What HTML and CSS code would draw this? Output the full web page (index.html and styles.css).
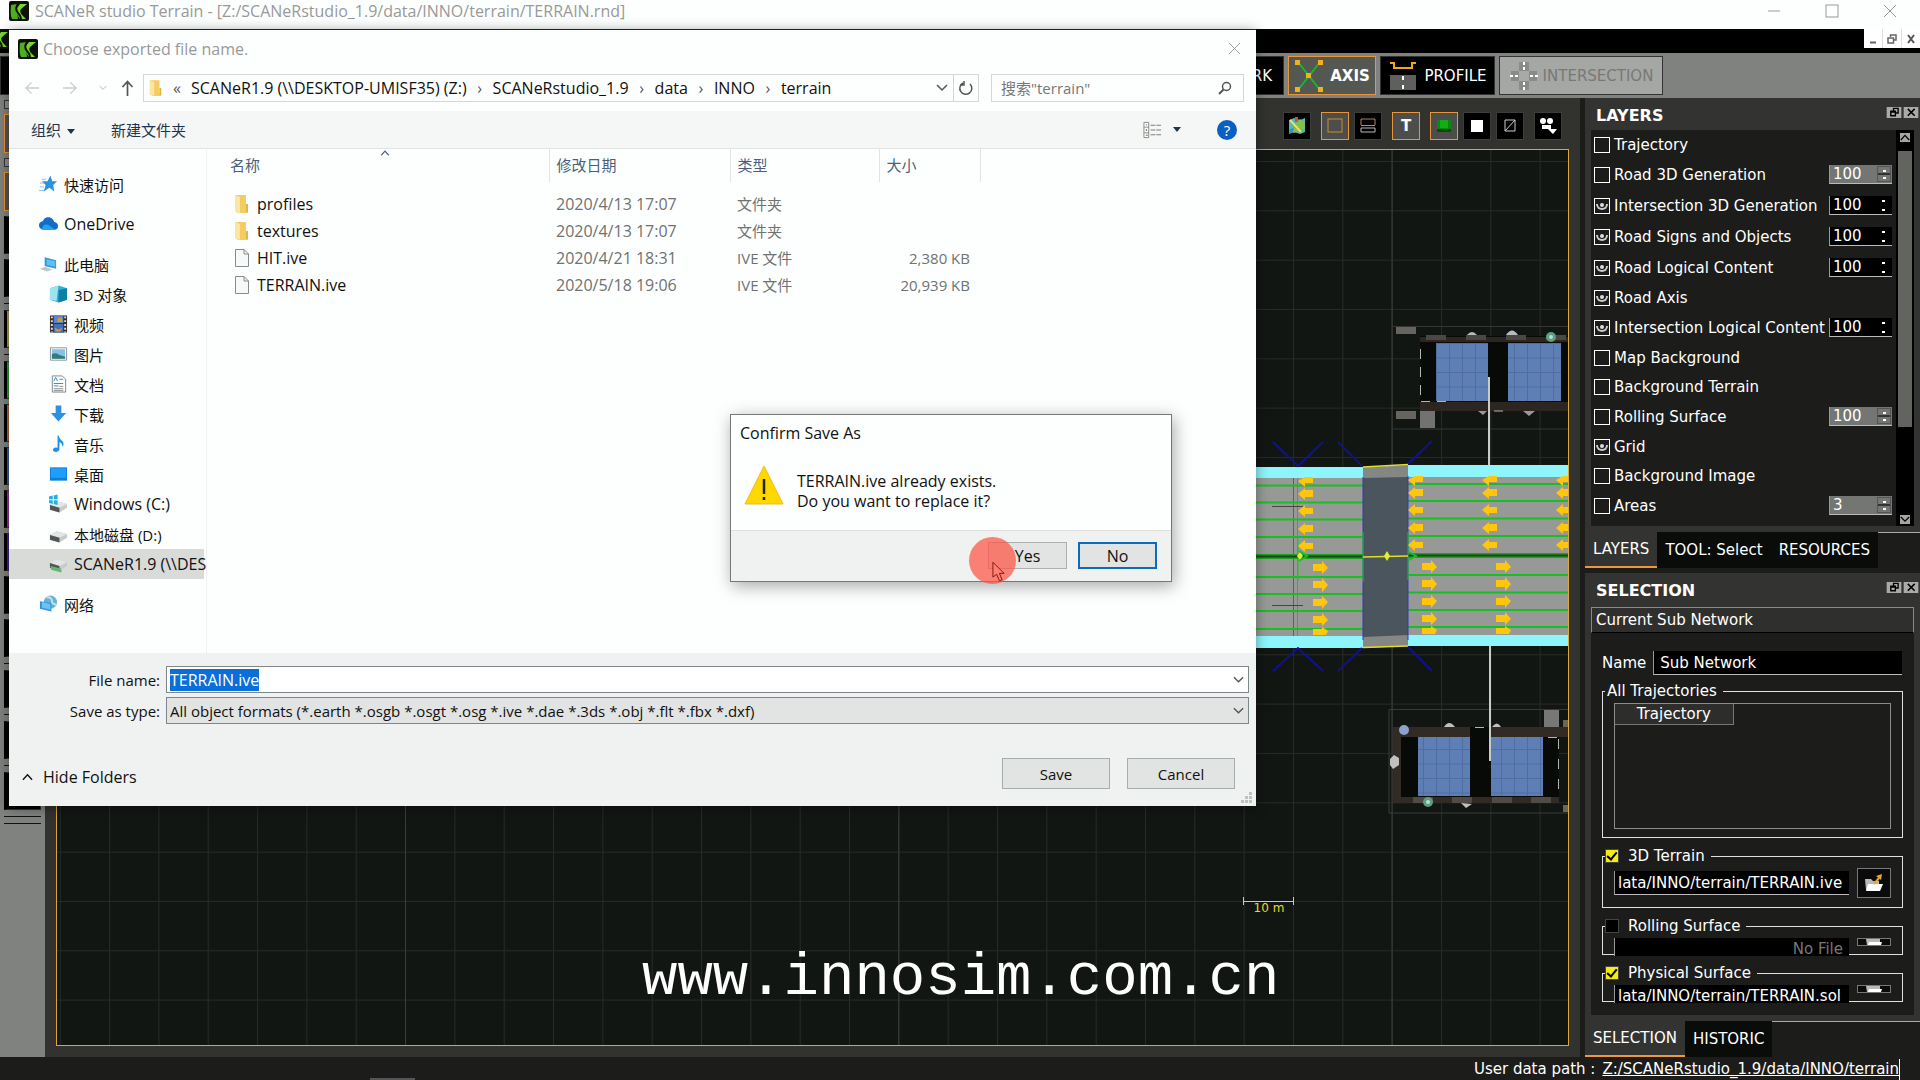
FILE: index.html
```html
<!DOCTYPE html>
<html lang="en">
<head>
    <meta charset="UTF-8">
    <meta name="viewport" content="width=device-width, initial-scale=1.0">
    <title>SCANeR studio Terrain</title>
    <link rel="stylesheet" href="styles.css">
</head>
<body>

<!-- shared icons -->
<svg class="defs" aria-hidden="true">
    <symbol id="logo" viewBox="0 0 20 20">
        <rect width="20" height="20" rx="2" fill="#0c120a"/>
        <path d="M2 4L8 3Q6 7 8 11L9 18H3Q1 14 2 4Z" fill="#4fae1e"/>
        <path d="M11 3H18L12 8Q10 10 13 14L17 18H11Q6 12 8 7Z" fill="#79d72c"/>
        <path d="M10 2Q5 7 9 12Q12 15 12 19" stroke="#0c120a" stroke-width="2" fill="none"/>
    </symbol>
    <symbol id="folder" viewBox="0 0 16 20">
        <path d="M1 1H12V16L14 17V19H4L1 17Z" fill="#f3cc63"/>
        <path d="M1 1L6 3V19L1 17Z" fill="#fbe6a2"/>
        <path d="M12 10h2v8h-2z" fill="#e3b548"/>
    </symbol>
    <symbol id="file" viewBox="0 0 16 20">
        <path d="M1.500 1.500H10L14.500 6V18.500H1.500Z" fill="#f7f9f9" stroke="#858b8e"/>
        <path d="M10 1.500V6H14.500" fill="none" stroke="#858b8e"/>
    </symbol>
    <symbol id="chev-down" viewBox="0 0 12 8"><path d="M1 1L6 6L11 1" fill="none" stroke="currentColor" stroke-width="1.500"/></symbol>
    <symbol id="chev-up" viewBox="0 0 12 8"><path d="M1 7L6 1.500L11 7" fill="none" stroke="currentColor" stroke-width="1.500"/></symbol>
    <symbol id="cross" viewBox="0 0 14 14"><path d="M1 1L13 13M13 1L1 13" stroke="currentColor" fill="none"/></symbol>
    <symbol id="drive" viewBox="0 0 20 18">
        <path d="M1 9L8 5L19 8V12L11 17L1 14Z" fill="#c9cbcb"/>
        <path d="M1 9L11 12L19 8L8 5Z" fill="#e3e5e5"/>
        <path d="M1 9L11 12V17L1 14Z" fill="#505654"/>
    </symbol>
    <symbol id="dock-float" viewBox="0 0 16 12">
        <rect width="16" height="12" fill="#a9aba8"/>
        <path d="M7.500 4V1.500H12.500V6.500H10M4.500 4.500H9.500V9.500H4.500ZM4 5.500H10" fill="none" stroke="#000" stroke-width="1.500"/>
    </symbol>
    <symbol id="dock-close" viewBox="0 0 16 12">
        <rect width="16" height="12" fill="#a9aba8"/>
        <path d="M4.500 2L12 9.500M12 2L4.500 9.500" stroke="#000" stroke-width="1.700"/>
    </symbol>
    <symbol id="open" viewBox="0 0 20 18">
        <path d="M1 5H7L9 7H15V16H2Z" fill="#b9bab9"/>
        <path d="M4 10H19L16 17H2Z" fill="#fff"/>
        <path d="M10 10L15 4" stroke="#e5a82a" stroke-width="2"/>
        <path d="M12 2L18 0L17 6Z" fill="#e5a82a"/>
    </symbol>
    <symbol id="open-clipped" viewBox="0 0 20 6">
        <path d="M2 0H16V6H3Z" fill="#b9bab9"/>
        <path d="M5 3H18L17 6H4Z" fill="#fff"/>
    </symbol>
    <symbol id="lanes-l" viewBox="0 0 15 80" overflow="visible">
        <path d="M0 6L7 2H15V8H7V12ZM0 19L7 13V15H15V22H7V25ZM0 36L7 30V33H15V39H7V42ZM0 54L7 48V50H15V57H7V60ZM0 71L7 65V68H15V74H7V77Z" fill="#ffc60b"/>
    </symbol>
    <symbol id="lanes-r" viewBox="0 0 15 80" overflow="visible">
        <path d="M15 7L9 0V3H0V10H9V13ZM15 24L9 17V20H0V27H9V31ZM15 41L9 35V38H0V45H9V48ZM15 59L9 52V55H0V62H9V65ZM15 70L9 66V68H0V74H13Z" fill="#ffc60b"/>
    </symbol>
</svg>

<div class="app">
    <header class="titlebar">
        <svg class="logo"><use href="#logo"/></svg>
        <h1>SCANeR studio Terrain - [Z:/SCANeRstudio_1.9/data/INNO/terrain/TERRAIN.rnd]</h1>
        <div class="window-buttons">
            <button aria-label="Minimize"><svg viewBox="0 0 14 14"><path d="M1 7H13" stroke="currentColor"/></svg></button>
            <button aria-label="Maximize"><svg viewBox="0 0 14 14"><rect x="1" y="1" width="12" height="12" fill="none" stroke="currentColor"/></svg></button>
            <button aria-label="Close"><svg><use href="#cross"/></svg></button>
        </div>
    </header>

    <div class="menubar">
        <svg class="logo"><use href="#logo"/></svg>
        <div class="mdi-buttons">
            <button aria-label="Minimize document"><svg viewBox="0 0 10 10"><path d="M2 8.500H8" stroke="#666" stroke-width="2"/></svg></button>
            <button aria-label="Restore document"><svg viewBox="0 0 10 10"><path d="M3.500 3V1H9V6H7M1 4H6.500V9H1Z" stroke="#666" fill="none" stroke-width="1.500"/></svg></button>
            <button aria-label="Close document"><svg viewBox="0 0 10 10"><path d="M2 1L8 9M8 1L2 9" stroke="#555" stroke-width="2"/></svg></button>
        </div>
    </div>

    <div class="modebar">
        <button class="mode network">NETWORK</button>
        <button class="mode active">
            <svg viewBox="0 0 30 36" class="mode-icon"><path d="M4 4L26 32M26 4L4 32" stroke="#18b82e" stroke-width="2"/><path d="M1 2h5v5H1zM24 2h5v5h-5zM12 15h5v5h-5zM1 29h5v5H1zM24 29h5v5h-5z" fill="#f2b01e"/></svg>
            AXIS
        </button>
        <button class="mode">
            <svg viewBox="0 0 30 36" class="mode-icon"><path d="M2 5H6V10H24V5H28" fill="none" stroke="#f2a51e" stroke-width="2"/><rect x="2" y="17" width="26" height="15" fill="#5d605d"/><path d="M15 18v4M15 27v4" stroke="#fff" stroke-width="2"/></svg>
            PROFILE
        </button>
        <button class="mode off">
            <svg viewBox="0 0 30 36" class="mode-icon"><path d="M10 4h10v9h8v10h-8v9H10v-9H2V13h8z" fill="#8a8c8a"/><path d="M10 13h10v10H10z" fill="#a8aaa8"/><path d="M15 4v3M15 9v3M15 24v3M15 29v3M1 18h3M6 18h3M21 18h3M26 18h3" stroke="#fff" stroke-width="2"/></svg>
            INTERSECTION
        </button>
    </div>

    <main class="workspace">
        <aside class="toolstrip">
            <i class="tool grey"></i><i class="tool lit"></i><i class="tool grey"></i><i class="tool lit"></i>
            <i class="tool"></i><i class="tool"></i><hr>
            <i class="tool yellow"></i><hr>
            <i class="tool green"></i><i class="tool orange"></i><i class="tool blue"></i><i class="tool pink"></i>
            <i class="tool purple"></i><i class="tool"></i><i class="tool"></i><hr>
            <i class="tool"></i><hr><i class="tool"></i><hr><i class="tool"></i><hr><hr>
        </aside>

        <section class="map-frame">
            <div class="map-tools">
                <button aria-label="Background map"><svg viewBox="0 0 20 20"><path d="M2 4L7 2L13 4L18 2V16L13 18L7 16L2 18Z" fill="#58b6b0"/><path d="M2 14L13 3L18 7V12L7 17Z" fill="#7fc14b"/><path d="M3 4L14 16" stroke="#f0dc6a" stroke-width="2"/><path d="M8 1h3v5H8z" fill="#d04f35"/><path d="M2 14L7 11L6 16L2 18Z" fill="#3b8fd8"/></svg></button>
                <button class="on gap" aria-label="Top view"><svg viewBox="0 0 20 20"><rect x="3" y="3" width="14" height="13" fill="none" stroke="#c98f28"/></svg></button>
                <button aria-label="Split view"><svg viewBox="0 0 20 20"><path d="M3 9V3H17V9" fill="none" stroke="#b98357"/><path d="M3 12V16H17V12Z" fill="none" stroke="#bbb"/><path d="M3 9.500H17" stroke="#c98f28"/></svg></button>
                <button class="on gap" aria-label="Text">T</button>
                <button class="on gap" aria-label="Surface"><svg viewBox="0 0 20 20"><rect x="3" y="4" width="14" height="12" fill="#078a0c"/><path d="M6 4h8v8H6z" fill="#12ad17"/><path d="M3 13h14v3H3z" fill="#034d06"/></svg></button>
                <button aria-label="Filled"><svg viewBox="0 0 20 20"><rect x="4" y="4" width="12" height="12" fill="#fff"/></svg></button>
                <button aria-label="Wireframe"><svg viewBox="0 0 20 20"><path d="M5 4H15V15H5ZM15 4L5 15" fill="none" stroke="#ccc"/></svg></button>
                <button class="gap" aria-label="Camera"><svg viewBox="0 0 20 20"><circle cx="5" cy="5" r="3" fill="#fff"/><circle cx="12" cy="5" r="3" fill="#fff"/><path d="M4 9h9v4H4zM10 13h9l-4 5z" fill="#fff"/></svg></button>
            </div>
            <div class="map">
                <svg class="terrain" viewBox="57 150 1511 896" preserveAspectRatio="xMaxYMin slice">
                    <defs>
                        <pattern id="minor" x="10.400" y="161" width="49.330" height="49.330" patternUnits="userSpaceOnUse"><path d="M0 .5H50M.5 0V50" stroke="#272a27" fill="none"/></pattern>
                        <pattern id="major" x="405" y="0" width="493.300" height="2000" patternUnits="userSpaceOnUse"><path d="M.5 0V2000" stroke="#3a3d3a"/></pattern>
                        <pattern id="tiles" x="1436" y="343" width="13" height="14.500" patternUnits="userSpaceOnUse"><rect width="13" height="14.500" fill="#5e7eb6"/><path d="M0 .5H13M.5 0V15" stroke="#506d9f" fill="none"/></pattern>
                    </defs>
                    <rect x="57" y="150" width="1511" height="896" fill="#121613"/>
                    <rect x="57" y="150" width="1511" height="896" fill="url(#minor)"/>
                    <rect x="57" y="150" width="1511" height="896" fill="url(#major)"/>

                    <!-- upper building -->
                    <path d="M1392 326.500H1568M1392 429H1568" stroke="#363636"/>
                    <path d="M1420 336H1568V411H1420Z" fill="#080a08"/>
                    <path d="M1420 337H1568V342H1420ZM1420 402H1568V411H1420Z" fill="#2c2520"/>
                    <path d="M1426 335h20v5h-20zM1466 335h20v5h-20zM1506 335h20v5h-20zM1546 335h20v5h-20z" fill="#4a4745"/>
                    <path d="M1396 327h20v7h-20zM1396 411h20v8h-20z" fill="#66645e"/>
                    <path d="M1420 411h15v17h-15z" fill="#727272"/>
                    <path d="M1420.500 349v52M1421 401.500h9M1437 401.500h9M1494 411h9" stroke="#b5b5b0" stroke-dasharray="10 8"/>
                    <path d="M1436 343h52v58h-52zM1508 343h53v58h-53z" fill="url(#tiles)"/>
                    <path d="M1467 335q5-6 10 0zM1506 335q6-9 12 0z" fill="#b7bac0"/>
                    <path d="M1478 411l5 4 4-4zM1523 411l6 5 6-5z" fill="#999"/>
                    <circle cx="1551" cy="337" r="5" fill="#5f9c82"/><circle cx="1551" cy="337" r="2" fill="#b4dfca"/>

                    <!-- lower building -->
                    <path d="M1568 709.500H1389V813H1568" fill="none" stroke="#3a3a3a"/>
                    <path d="M1393 727h166v76h-166z" fill="#080a08"/>
                    <path d="M1393 727h77v10h-69v66h-8zM1490 727h78v10h-78zM1401 797h158v6h-158z" fill="#322a24"/>
                    <path d="M1413 797h20v6h-20zM1452 797h20v6h-20zM1492 797h20v6h-20zM1531 797h20v6h-20z" fill="#504b46"/>
                    <path d="M1544 710h15v17h-15z" fill="#777"/><path d="M1563 720h5v7h-5zM1563 805h5v7h-5z" fill="#6b6655"/>
                    <path d="M1418 737h52v59h-52zM1491 737h52v59h-52z" fill="url(#tiles)"/>
                    <path d="M1558.500 739v56M1475 727.500h9M1548 737.500h9" stroke="#b5b5b0" stroke-dasharray="10 10"/>
                    <path d="M1444 727q5-8 11 0zM1492 727q5-7 9 0zM1390 759l4-4 5 3v7l-6 4-3-4zM1461 803l5 5 6-4z" fill="#c0c0c0"/>
                    <circle cx="1404" cy="730" r="5" fill="#8ca3cf"/><circle cx="1428" cy="802" r="5" fill="#5f9c82"/><circle cx="1428" cy="802" r="2" fill="#b4dfca"/>
                    <path d="M1489 377V465M1490 646V761" stroke="#c9ccc9" stroke-width="2"/>

                    <!-- road -->
                    <path d="M1200 467h163v181h-163zM1408 465h160v181h-160z" fill="#8df5fb"/>
                    <path d="M1200 478h163v158h-163zM1408 477h160v158h-160z" fill="#979996"/>
                    <path d="M1293.500 478V636" stroke="#606060"/><path d="M1297.500 478V636" stroke="#7c77a8"/>
                    <path d="M1272 506.500h31M1272 605.500h31" stroke="#454545"/>
                    <path d="M1200 485.500h163M1200 502.500h163M1200 519.500h163M1200 537h163M1200 577h163M1200 594h163M1200 611h163M1200 629h163M1408 484h160M1408 501h160M1408 518.500h160M1408 536h160M1408 575h160M1408 592.500h160M1408 610h160M1408 627h160" stroke="#18bf20" stroke-width="2"/>
                    <path d="M1200 556.500h163M1408 555.500h160" stroke="#16a51c" stroke-width="5"/>
                    <path d="M1200 556.500h163M1408 555.500h160" stroke="#24401d" stroke-width="2"/>
                    <path d="M1363 467L1408 465V646L1363 648Z" fill="#858784"/>
                    <path d="M1363 478L1408 477V635L1363 637Z" fill="#4b555e"/>
                    <path d="M1363 477V640M1408 476V640" stroke="#3436b5"/>
                    <path d="M1363 532V582M1408 532V580M1298 540V580" stroke="#22c52c"/>
                    <path d="M1363 467L1408 464.500M1363 647.500L1408 646M1363 557L1408 556" stroke="#dede25" stroke-width="1.500"/>
                    <path d="M1387 551l3 5-3 5-3-5zM1297 556l3-4 3 4-3 4z" fill="#e5ee2a"/>
                    <path d="M1299 551L1307 556L1299 561M1409 552L1416 556L1409 560" fill="none" stroke="#18bf20" stroke-width="2"/>
                    <path d="M1273 442L1298 466L1323 442M1338 442L1362 466M1408 464L1432 441M1273 671L1298 648L1323 671M1338 671L1362 648M1408 647L1432 671" fill="none" stroke="#11118f" stroke-width="2"/>
                    <use href="#lanes-l" x="1298" y="475" width="15" height="80"/>
                    <use href="#lanes-l" x="1408" y="474" width="15" height="80"/>
                    <use href="#lanes-l" x="1482" y="474" width="15" height="80"/>
                    <use href="#lanes-l" x="1556" y="474" width="15" height="80"/>
                    <use href="#lanes-r" x="1313" y="561" width="15" height="80"/>
                    <use href="#lanes-r" x="1422" y="560" width="15" height="80"/>
                    <use href="#lanes-r" x="1496" y="560" width="15" height="80"/>

                    <!-- scale -->
                    <path d="M1243.500 897v8M1293.500 897v8M1243 901.500h51" stroke="#e6d62c" fill="none"/>
                    <text x="1269" y="912" class="scale-text">10 m</text>
                </svg>
                <p class="watermark">www.innosim.com.cn</p>
            </div>
        </section>

        <aside class="dock">
            <section class="panel layers">
                <header class="panel-title"><h2>LAYERS</h2><button aria-label="Float layers"><svg><use href="#dock-float"/></svg></button><button aria-label="Close layers"><svg><use href="#dock-close"/></svg></button></header>
                <div class="layer-body">
                    <ul class="layer-list">
                        <li><label><input type="checkbox">Trajectory</label></li>
                        <li class="spin"><label><input type="checkbox">Road 3D Generation</label><span class="spinner off"><input value="100" aria-label="Road 3D Generation opacity"><i></i></span></li>
                        <li class="spin"><label><input type="checkbox" checked>Intersection 3D Generation</label><span class="spinner"><input value="100" aria-label="Intersection 3D Generation opacity"><i></i></span></li>
                        <li class="spin"><label><input type="checkbox" checked>Road Signs and Objects</label><span class="spinner"><input value="100" aria-label="Road Signs opacity"><i></i></span></li>
                        <li class="spin"><label><input type="checkbox" checked>Road Logical Content</label><span class="spinner"><input value="100" aria-label="Road Logical opacity"><i></i></span></li>
                        <li><label><input type="checkbox" checked>Road Axis</label></li>
                        <li class="spin"><label><input type="checkbox" checked>Intersection Logical Content</label><span class="spinner"><input value="100" aria-label="Intersection Logical opacity"><i></i></span></li>
                        <li><label><input type="checkbox">Map Background</label></li>
                        <li><label><input type="checkbox">Background Terrain</label></li>
                        <li class="spin"><label><input type="checkbox">Rolling Surface</label><span class="spinner off"><input value="100" aria-label="Rolling Surface opacity"><i></i></span></li>
                        <li><label><input type="checkbox" checked>Grid</label></li>
                        <li><label><input type="checkbox">Background Image</label></li>
                        <li class="spin"><label><input type="checkbox">Areas</label><span class="spinner off"><input value="3" aria-label="Areas"><i></i></span></li>
                    </ul>
                    <div class="scrollbar">
                        <button aria-label="Scroll up"><svg><use href="#chev-up"/></svg></button>
                        <div class="track"><div class="thumb"></div></div>
                        <button aria-label="Scroll down"><svg><use href="#chev-down"/></svg></button>
                    </div>
                </div>
            </section>
            <nav class="tabs"><button class="current">LAYERS</button><button>TOOL: Select</button><button>RESOURCES</button></nav>

            <section class="panel selection">
                <header class="panel-title"><h2>SELECTION</h2><button aria-label="Float selection"><svg><use href="#dock-float"/></svg></button><button aria-label="Close selection"><svg><use href="#dock-close"/></svg></button></header>
                <div class="sel-body">
                    <h3>Current Sub Network</h3>
                    <div class="name-row"><label for="subName">Name</label><input id="subName" value="Sub Network"></div>
                    <fieldset class="trajectories">
                        <legend>All Trajectories</legend>
                        <div class="traj-box"><table><tr><th>Trajectory</th></tr></table></div>
                    </fieldset>
                    <fieldset>
                        <legend><label><input type="checkbox" checked>3D Terrain</label></legend>
                        <div class="path-row"><input value="lata/INNO/terrain/TERRAIN.ive" aria-label="3D Terrain file"><button aria-label="Open 3D terrain"><svg><use href="#open"/></svg></button></div>
                    </fieldset>
                    <fieldset class="short">
                        <legend><label><input type="checkbox">Rolling Surface</label></legend>
                        <div class="path-row"><input value="No File" disabled aria-label="Rolling surface file"><button aria-label="Open rolling surface"><svg><use href="#open-clipped"/></svg></button></div>
                    </fieldset>
                    <fieldset class="short">
                        <legend><label><input type="checkbox" checked>Physical Surface</label></legend>
                        <div class="path-row"><input value="lata/INNO/terrain/TERRAIN.sol" aria-label="Physical surface file"><button aria-label="Open physical surface"><svg><use href="#open-clipped"/></svg></button></div>
                    </fieldset>
                </div>
            </section>
            <nav class="tabs bottom"><button class="current">SELECTION</button><button>HISTORIC</button></nav>
        </aside>
    </main>

    <footer class="statusbar"><span>User data path :</span><a href="#">Z:/SCANeRstudio_1.9/data/INNO/terrain</a></footer>
</div>

<!-- export dialog -->
<div class="dialog" role="dialog" aria-label="Choose exported file name.">
    <header class="dialog-title">
        <svg class="logo"><use href="#logo"/></svg>
        <h2>Choose exported file name.</h2>
        <button aria-label="Close dialog"><svg><use href="#cross"/></svg></button>
    </header>

    <div class="address-row">
        <div class="history">
            <button disabled aria-label="Back"><svg viewBox="0 0 16 14"><path d="M15 7H2M7 1L1 7L7 13" fill="none" stroke="#ccc" stroke-width="1.500"/></svg></button>
            <button disabled aria-label="Forward"><svg viewBox="0 0 16 14"><path d="M1 7H14M9 1L15 7L9 13" fill="none" stroke="#ccc" stroke-width="1.500"/></svg></button>
            <button disabled aria-label="Recent" class="tiny"><svg><use href="#chev-down"/></svg></button>
            <button aria-label="Up"><svg viewBox="0 0 14 16"><path d="M7 16V2M2 7L7 1.500L12 7" fill="none" stroke="#555" stroke-width="1.700"/></svg></button>
        </div>
        <nav class="address">
            <svg class="folder"><use href="#folder"/></svg>
            <span class="sep first">«</span>
            <a href="#">SCANeR1.9 (\\DESKTOP-UMISF35) (Z:)</a><span class="sep">›</span>
            <a href="#">SCANeRstudio_1.9</a><span class="sep">›</span>
            <a href="#">data</a><span class="sep">›</span>
            <a href="#">INNO</a><span class="sep">›</span>
            <a href="#">terrain</a>
            <button class="drop" aria-label="Previous locations"><svg><use href="#chev-down"/></svg></button>
            <button class="refresh" aria-label="Refresh"><svg viewBox="0 0 16 16"><path d="M5 3A6 6 0 1 0 12 4M6 1V5H2" fill="none" stroke="#555" stroke-width="1.500"/></svg></button>
        </nav>
        <div class="search">
            <input placeholder='搜索"terrain"' aria-label="Search">
            <svg viewBox="0 0 14 14"><circle cx="8.500" cy="5.500" r="4" fill="none" stroke="#555" stroke-width="1.500"/><path d="M5.500 8.500L1 13" stroke="#555" stroke-width="2"/></svg>
        </div>
    </div>

    <div class="commands">
        <button>组织 <span class="caret"></span></button>
        <button>新建文件夹</button>
        <button class="view" aria-label="Change view"><svg viewBox="0 0 20 18"><path d="M1 1h5v16H1zM1 6h5M1 12h5" fill="#fff" stroke="#888"/><path d="M3 3h1v1H3z" fill="#378"/><path d="M3 8h1v2H3z" fill="#383"/><path d="M3 14h2v1H3z" fill="#b42"/><path d="M8 4h12M8 9h12M8 14h12" stroke="#777" stroke-dasharray="5 1"/></svg><span class="caret"></span></button>
        <button class="help" aria-label="Help">?</button>
    </div>

    <div class="browser">
        <ul class="places">
            <li class="root"><svg viewBox="0 0 20 20"><path d="M12 1L14 7H19L15 11L16 18L11 14L5 18L7 11L3 7H9Z" fill="#2a93dd"/><path d="M3 5h4M1 9h4M1 13h4M0 17h5" stroke="#7fb9e6"/></svg>快速访问</li>
            <li class="root latin"><svg viewBox="0 0 20 20"><path d="M4 16Q0 15 0 11Q0 8 4 7Q6 2 11 3Q15 4 16 8Q20 9 20 12Q20 16 16 16Z" fill="#0f6cc9"/><path d="M3 15Q5 9 10 11L17 16H5Z" fill="#2ba0ee"/></svg>OneDrive</li>
            <li class="root stay"><svg viewBox="0 0 20 20"><path d="M6 3L18 6V15L6 12Z" fill="#3098dd"/><path d="M8 5L17 7V13L8 11Z" fill="#64bdf0"/><path d="M1 15L7 13L14 16L8 18Z" fill="#bfc7ca"/></svg>此电脑</li>
            <li><svg viewBox="0 0 20 20"><path d="M1 4L10 1L19 4V16L10 19L1 16Z" fill="#35aed0"/><path d="M1 4L10 1L8 17L1 16Z" fill="#9de4f0"/><path d="M10 6L19 4V16L10 19Z" fill="#0d7fa8"/></svg>3D 对象</li>
            <li><svg viewBox="0 0 20 20"><path d="M1 1h18v18H1z" fill="#333"/><path d="M5 1h10v8H5z" fill="#5c86c6"/><path d="M5 10h10v9H5z" fill="#476eb8"/><path d="M9 4l4-1 2 5h-6zM6 14l4 2 4-2-2 4H7z" fill="#d09b3b"/><path d="M3 2v17M17 2v17" stroke="#ddd" stroke-width="2" stroke-dasharray="2 2"/></svg>视频</li>
            <li><svg viewBox="0 0 20 20"><path d="M1.500 3.500h17v13h-17z" fill="#fff" stroke="#899298"/><path d="M3 5h14v10H3z" fill="#86c1ea"/><path d="M3 10Q8 8 11 11L17 13V15H3Z" fill="#347b78"/></svg>图片</li>
            <li><svg viewBox="0 0 20 20"><path d="M3.500 1.500H14L17.500 5V18.500H3.500Z" fill="#fff" stroke="#7c868c"/><path d="M5 7L7 3L9 7M11 5h4M5 9.500h10M5 12h5" stroke="#2290bb" fill="none"/><path d="M11 12.500h4M5 15h10M5 17h10" stroke="#888"/></svg>文档</li>
            <li><svg viewBox="0 0 20 20"><path d="M7 1H13V9H18L10 18L2 9H7Z" fill="#2f8fe0"/></svg>下载</li>
            <li><svg viewBox="0 0 20 20"><path d="M10 1Q11 5 15 8Q16 11 14 13Q14 9 11 8V15Q11 18 7 18.500Q4 18 4 16Q5 13 9 14V1Z" fill="#1b94e6"/></svg>音乐</li>
            <li><svg viewBox="0 0 20 20"><path d="M1 3h18v14H1z" fill="#0f7ed6"/><path d="M2 4h16v10H2z" fill="#1e9fff"/></svg>桌面</li>
            <li class="latin"><svg viewBox="0 0 20 20"><use href="#drive" y="2" width="20" height="18"/><path d="M0 2l4-1v4H0zM5 1l4-1v5H5zM0 6h4v4L0 9zM5 6h4v5l-4-1z" fill="#23aee0"/></svg>Windows (C:)</li>
            <li><svg viewBox="0 0 20 20"><use href="#drive" y="2" width="20" height="18"/></svg>本地磁盘 (D:)</li>
            <li class="latin chosen"><svg viewBox="0 0 20 20"><use href="#drive" width="20" height="18"/><path d="M2 12L13 15V19L2 16Z" fill="#67b372"/></svg>SCANeR1.9 (\\DES</li>
            <li class="root net"><svg viewBox="0 0 20 20"><circle cx="12" cy="8" r="7" fill="#6cb0d4"/><path d="M8 3Q14 2 14 9L18 11" stroke="#c6e3f0" fill="none" stroke-width="2"/><path d="M1 7L13 9V18L1 15Z" fill="#2d93de"/><path d="M3 8L12 10V16L3 14Z" fill="#6cc0f3"/></svg>网络</li>
        </ul>

        <table class="files">
            <colgroup><col class="c-name"><col class="c-date"><col class="c-type"><col class="c-size"><col></colgroup>
            <thead>
                <tr><th>名称<svg class="sort"><use href="#chev-up"/></svg></th><th>修改日期</th><th>类型</th><th>大小</th><th></th></tr>
            </thead>
            <tbody>
                <tr><td><svg><use href="#folder"/></svg>profiles</td><td>2020/4/13 17:07</td><td>文件夹</td><td></td><td></td></tr>
                <tr><td><svg><use href="#folder"/></svg>textures</td><td>2020/4/13 17:07</td><td>文件夹</td><td></td><td></td></tr>
                <tr><td><svg><use href="#file"/></svg>HIT.ive</td><td>2020/4/21 18:31</td><td>IVE 文件</td><td>2,380 KB</td><td></td></tr>
                <tr><td><svg><use href="#file"/></svg>TERRAIN.ive</td><td>2020/5/18 19:06</td><td>IVE 文件</td><td>20,939 KB</td><td></td></tr>
            </tbody>
        </table>
    </div>

    <div class="save-area">
        <div class="field"><label for="fileName">File name:</label><div class="combo"><input id="fileName" value="TERRAIN.ive" autofocus onfocus="this.select()"><svg><use href="#chev-down"/></svg></div></div>
        <div class="field"><label for="fileType">Save as type:</label><div class="combo"><select id="fileType"><option>All object formats (*.earth *.osgb *.osgt *.osg *.ive *.dae *.3ds *.obj *.flt *.fbx *.dxf)</option></select><svg><use href="#chev-down"/></svg></div></div>
        <div class="actions">
            <button class="hide-folders"><svg><use href="#chev-up"/></svg>Hide Folders</button>
            <button class="push">Save</button>
            <button class="push">Cancel</button>
        </div>
        <svg class="grip" viewBox="0 0 12 12"><path d="M8 0h3v3H8zM8 4h3v3H8zM4 4h3v3H4zM8 8h3v3H8zM4 8h3v3H4zM0 8h3v3H0z" fill="#bfc1bf"/></svg>
    </div>
</div>

<!-- overwrite confirmation -->
<div class="confirm" role="alertdialog" aria-label="Confirm Save As">
    <h2>Confirm Save As</h2>
    <div class="message">
        <svg viewBox="0 0 40 40"><path d="M20 1L39 39H1Z" fill="#ffd800" stroke="#efbb2c"/><path d="M20 14V29M20 32V35" stroke="#222" stroke-width="2.500"/></svg>
        <p>TERRAIN.ive already exists.<br>Do you want to replace it?</p>
    </div>
    <footer><button>Yes</button><button class="default">No</button></footer>
</div>
<div class="click-mark"><svg viewBox="0 0 14 22"><path d="M1 1V17L5 14L8 21L11 20L8 13H13Z" fill="#ff8072" stroke="#7d1010"/></svg></div>

</body>
</html>
```
FILE: styles.css
```css
*, *::before, *::after {
    box-sizing: border-box;
}
body {
    margin: 0;
    background: #1c1c1b;
    font-family: "Open Sans", "Noto Sans CJK SC", sans-serif;
    font-size: 15px;
    overflow: hidden;
}
h1, h2, h3, p, ul {
    margin: 0;
    padding: 0;
    font-weight: normal;
    list-style: none;
}
button, input, select {
    font: inherit;
    color: inherit;
    margin: 0;
    padding: 0;
    border: 0;
    border-radius: 0;
    background: none;
    outline: none;
}
a {
    color: inherit;
    text-decoration: none;
}
svg {
    flex: none;
    display: block;
}
.defs {
    position: absolute;
    width: 0;
    height: 0;
}
.logo {
    width: 20px;
    height: 20px;
}

/* main window */
.app {
    display: flex;
    flex-direction: column;
    height: 100vh;
    color: #fff;
    font-family: "DejaVu Sans", Verdana, sans-serif;
}
.titlebar {
    display: flex;
    align-items: center;
    gap: 6px;
    height: 29px;
    padding: 0 23px 8px 9px;
    background: #fdfffe;
    color: #999;
    font-family: "Open Sans", sans-serif;
}
.titlebar h1 {
    flex: 1;
    font-size: 16px;
    line-height: 20px;
}
.window-buttons {
    display: flex;
    gap: 44px;
}
.window-buttons svg {
    width: 14px;
    height: 14px;
}
.menubar {
    display: flex;
    justify-content: space-between;
    height: 24px;
    background: #000;
}
.menubar .logo {
    margin-left: -10px;
}
.mdi-buttons {
    display: flex;
    gap: 1px;
    height: 19px;
    background: #ddd;
}
.mdi-buttons button {
    width: 18px;
    background: #fff;
}
.mdi-buttons svg {
    width: 10px;
    height: 10px;
    margin: auto;
}
.modebar {
    display: flex;
    gap: 4px;
    height: 45px;
    padding: 3px 0;
    background: #80827f;
}
.mode {
    display: flex;
    align-items: center;
    justify-content: center;
    gap: 6px;
    width: 115px;
    border: 1px solid #333;
    background: #000;
}
.mode.network {
    justify-content: flex-end;
    width: 67%;
    max-width: 1284px;
    padding-right: 11px;
}
.mode.active {
    width: 88px;
    border-color: #e8963a;
    background: #555753;
    font-weight: bold;
}
.mode.off {
    width: 164px;
    gap: 4px;
    background: #a5a7a4;
    color: #777976;
}
.mode-icon {
    width: 30px;
    height: 36px;
}
.workspace {
    flex: 1;
    display: flex;
    min-height: 0;
}
.toolstrip {
    width: 45px;
    padding: 2px 4px;
    background: #80827f;
}
.tool {
    display: block;
    height: 38px;
    margin-bottom: 5px;
    border: 1px solid #333;
    border-left: 3px solid #000;
    background: #000;
}
.tool.grey {
    height: 9px;
    border: 1px solid #333;
    background: #8e908d;
}
.tool.lit {
    height: 39px;
    border: 1px solid #e8963a;
    background: #555;
}
.tool.yellow { background: #a89a4a; }
.tool.green { background: #2f9b3b; }
.tool.orange { background: #a9683a; }
.tool.blue { background: #385a9a; }
.tool.pink { background: #9a2f92; }
.tool.purple { background: #43218f; }
.toolstrip hr {
    height: 1px;
    margin: 6px 0;
    border: 0;
    background: #111;
}
.map-frame {
    flex: 1;
    display: flex;
    flex-direction: column;
    min-width: 0;
    padding: 0 11px 11px;
    background: #32332f;
}
.map-tools {
    display: flex;
    align-items: center;
    justify-content: flex-end;
    gap: 5px;
    height: 51px;
    padding: 4px 7px 0 0;
}
.map-tools button {
    width: 28px;
    height: 28px;
    border: 1px solid #3c3c3a;
    background: #000;
    font-weight: bold;
}
.map-tools .on {
    border-color: #e8963a;
    background: #4d4e4b;
}
.map-tools .gap {
    margin-left: 5px;
}
.map-tools svg {
    width: 20px;
    height: 20px;
    margin: auto;
}
.map {
    flex: 1;
    position: relative;
    min-height: 0;
    border: 1px solid #dba637;
}
.terrain {
    width: 100%;
    height: 100%;
}
.scale-text {
    font: 12px "DejaVu Sans", sans-serif;
    fill: #e6d62c;
    text-anchor: middle;
}
.watermark {
    position: absolute;
    left: 585px;
    bottom: 30px;
    font: 59px/72px "Liberation Mono", monospace;
}

/* dock */
.dock {
    width: 340px;
    display: flex;
    flex-direction: column;
    border-left: 5px solid #1c1c1b;
}
.panel {
    padding: 0 6px 6px;
    background: #333432;
}
.panel-title {
    display: flex;
    align-items: center;
    gap: 1px;
    height: 32px;
    margin-right: -5px;
    padding-left: 5px;
}
.panel-title h2 {
    flex: 1;
    padding-top: 3px;
    font-size: 16px;
    font-weight: bold;
}
.panel-title button {
    padding-bottom: 4px;
}
.panel-title svg {
    width: 16px;
    height: 11px;
}
.layer-body {
    display: flex;
    height: 396px;
    background: #1c1c1b;
}
.layer-list {
    flex: 1;
    padding-left: 3px;
}
.layer-list li {
    display: flex;
    align-items: center;
    justify-content: space-between;
    height: 29px;
    padding-right: 4px;
    white-space: nowrap;
}
.layer-list .spin {
    height: 31px;
}
.layer-list label {
    display: flex;
    align-items: center;
    gap: 4px;
}
.layer-list input[type=checkbox] {
    appearance: none;
    position: relative;
    width: 16px;
    height: 16px;
    border: 1px solid #fff;
}
.layer-list input:checked::after {
    content: "";
    position: absolute;
    left: 1px;
    top: 5px;
    width: 12px;
    height: 6px;
    border: 2px solid #ccc;
    border-top: 0;
    border-radius: 0 0 6px 6px;
}
.layer-list input:checked::before {
    content: "";
    position: absolute;
    left: 5px;
    top: 4px;
    width: 4px;
    height: 4px;
    border-radius: 2px;
    background: #ddd;
}
.spinner {
    position: relative;
    width: 63px;
    height: 19px;
    border-left: 1px solid #999;
    border-bottom: 1px solid #bbb;
    background: #000;
}
.spinner input {
    width: 44px;
    height: 18px;
    padding-left: 3px;
}
.spinner i {
    position: absolute;
    right: 7px;
    top: 4px;
    width: 3px;
    height: 11px;
    border: solid #fff;
    border-width: 2px 0;
}
.spinner.off {
    background: #747673;
}
.spinner.off i {
    right: 1px;
    top: 1px;
    width: 14px;
    height: 16px;
    border: 1px solid #555;
    background:
        linear-gradient(#fff, #fff) 5px 3px / 3px 2px no-repeat,
        linear-gradient(#fff, #fff) 5px 10px / 3px 2px no-repeat,
        linear-gradient(#747673 6px, #333 6px, #333 8px, #747673 8px);
}
.scrollbar {
    display: flex;
    flex-direction: column;
    width: 18px;
    background: #000;
}
.scrollbar button {
    height: 14px;
}
.scrollbar svg {
    width: 10px;
    height: 9px;
    margin: 0 auto;
    background: #a5a7a4;
    color: #000;
}
.track {
    flex: 1;
    padding: 7px 2px;
}
.thumb {
    height: 78%;
    background: #62645f;
}
.tabs {
    display: flex;
    height: 36px;
    background: linear-gradient(#aaa 1px, #1c1c1b 1px);
}
.tabs button {
    padding: 0 8px;
    background: #090c09;
    white-space: nowrap;
}
.tabs .current {
    border-bottom: 2px solid #f0963c;
    background: #333432;
}
.selection {
    flex: 1;
    margin-top: 5px;
}
.sel-body {
    height: calc(100% - 34px);
    margin-top: 2px;
    background: #1c1c1b;
}
.sel-body h3 {
    height: 26px;
    margin-bottom: 18px;
    padding-left: 4px;
    border: 1px solid #888;
    border-bottom-color: #000;
    background: #2f302e;
    font-size: 15px;
    line-height: 24px;
}
.name-row {
    display: flex;
    align-items: center;
    gap: 7px;
    margin: 0 12px 7px 11px;
}
.name-row input, .path-row input {
    flex: 1;
    min-width: 0;
    height: 24px;
    padding-left: 6px;
    border-left: 1px solid #999;
    border-bottom: 1px solid #bbb;
    background: #000;
}
fieldset {
    height: 61px;
    margin: 0 11px 9px;
    padding: 0 11px;
    border: 1px solid #e0e0e0;
}
legend {
    margin-left: -9px;
    padding: 0 6px 0 0;
    line-height: 18px;
}
legend label {
    display: flex;
    align-items: center;
    gap: 9px;
}
legend input {
    appearance: none;
    position: relative;
    width: 14px;
    height: 14px;
    border: 1px solid #444;
    background: #000;
}
legend input:checked {
    background: #f4ea16;
}
legend input:checked::after {
    content: "";
    position: absolute;
    left: 3px;
    top: 0;
    width: 6px;
    height: 10px;
    border: solid #000;
    border-width: 0 2px 2px 0;
    transform: rotate(40deg);
}
.trajectories {
    height: 156px;
}
.trajectories legend {
    padding-left: 2px;
}
.traj-box {
    height: 126px;
    margin-top: 3px;
    border: 1px solid #8b8d8a;
}
.traj-box table {
    border-collapse: collapse;
}
.traj-box th {
    width: 118px;
    height: 20px;
    padding: 0;
    border: 1px solid #777;
    border-width: 0 1px 1px 0;
    background: #2d2e2c;
    font-weight: normal;
}
.path-row {
    display: flex;
    align-items: center;
    gap: 8px;
    margin-top: 3px;
}
.path-row input {
    padding-left: 3px;
}
.path-row button {
    width: 34px;
    height: 30px;
    border: 1px solid #777;
    background: #0b0b0b;
}
.path-row svg {
    width: 20px;
    height: 18px;
    margin: auto;
}
.short {
    height: 38px;
}
.short .path-row {
    align-items: flex-start;
}
.short .path-row input {
    height: 18px;
    padding-top: 3px;
    border-bottom: 0;
}
.short .path-row input:disabled {
    padding-right: 6px;
    color: #777;
    text-align: right;
}
.short .path-row button {
    height: 8px;
}
.short .path-row svg {
    height: 6px;
}
.statusbar {
    display: flex;
    gap: 7px;
    justify-content: flex-end;
    height: 23px;
    padding: 2px 20px 0 0;
    background: linear-gradient(#555, #555) 370px 21px / 45px 2px no-repeat #1c1c1b;
    line-height: 20px;
}
.statusbar a {
    border-right: 1px solid #fff;
    text-decoration: underline;
}

/* file dialog */
.dialog {
    position: absolute;
    left: 9px;
    top: 29px;
    width: calc(65% - 1px);
    border-top: 1px solid #222;
    background: #fdfffe;
    color: #111;
    box-shadow: 0 2px 12px rgba(0, 0, 0, .4);
}
.dialog-title {
    display: flex;
    align-items: center;
    gap: 5px;
    height: 37px;
    padding: 0 15px 0 9px;
    color: #999;
}
.dialog-title h2 {
    flex: 1;
    font-size: 16px;
}
.dialog-title button svg {
    width: 13px;
    height: 13px;
}
.address-row {
    display: flex;
    gap: 12px;
    padding: 7px 12px 9px 16px;
}
.history {
    display: flex;
    align-items: center;
    gap: 22px;
    width: 106px;
}
.history svg {
    width: 15px;
    height: 16px;
    color: #bbb;
}
.history .tiny svg {
    width: 8px;
    height: 8px;
}
.history button:last-child {
    margin-left: -9px;
}
.address, .search {
    display: flex;
    align-items: center;
    height: 28px;
    border: 1px solid #d5d7d6;
}
.address {
    flex: 1;
    padding-left: 5px;
    font-size: 16px;
}
.folder {
    width: 14px;
    height: 20px;
}
.sep {
    width: 26px;
    color: #555;
    text-align: center;
}
.sep.first {
    width: 28px;
}
.drop {
    margin-left: auto;
    padding: 0 5px;
    color: #555;
}
.drop svg {
    width: 12px;
    height: 8px;
}
.refresh {
    height: 26px;
    padding: 0 4px;
    border-left: 1px solid #d5d7d6;
}
.refresh svg {
    width: 16px;
    height: 16px;
}
.search {
    width: 253px;
    padding: 0 11px 0 9px;
}
.search input {
    flex: 1;
    min-width: 0;
}
.search input::placeholder {
    color: #777;
}
.search svg {
    width: 14px;
    height: 14px;
}
.commands {
    display: flex;
    align-items: center;
    height: 38px;
    padding: 0 19px 0 22px;
    gap: 36px;
    border-bottom: 1px solid #e2e4e3;
    background: #f5f7f6;
    color: #1e3450;
}
.caret {
    display: inline-block;
    margin-left: 2px;
    border: 4px solid transparent;
    border-top: 5px solid #1e3450;
    border-bottom: 0;
    vertical-align: middle;
}
.view {
    display: flex;
    align-items: center;
    gap: 9px;
    margin-left: auto;
}
.view svg {
    width: 19px;
    height: 18px;
}
.help {
    width: 20px;
    height: 20px;
    border-radius: 50%;
    background: #0a60c2;
    color: #fff;
    line-height: 20px;
}
.browser {
    display: flex;
    min-height: 504px;
}
.places {
    width: 198px;
    padding-top: 20px;
    border-right: 1px solid #f0f2f1;
}
.places li {
    display: flex;
    align-items: center;
    gap: 6px;
    width: 195px;
    height: 30px;
    padding-left: 40px;
    white-space: nowrap;
}
.places .root {
    margin-bottom: 10px;
    padding-left: 30px;
}
.places .latin {
    font-size: 16px;
}
.places .stay {
    margin-bottom: 0;
}
.places .net {
    margin-top: 10px;
}
.places .chosen {
    background: #d9dbd9;
}
.places svg {
    width: 19px;
    height: 20px;
}
.files {
    flex: 1;
    align-self: flex-start;
    table-layout: fixed;
    border-collapse: collapse;
    color: #6f7271;
}
.c-name { width: 342px; }
.c-date { width: 181px; }
.c-type { width: 149px; }
.c-size { width: 101px; }
.files th {
    height: 33px;
    padding: 0 0 2px 7px;
    border-right: 1px solid #e2e4e3;
    color: #4a5f7d;
    font-weight: normal;
    text-align: left;
}
.files th:first-child {
    position: relative;
    padding-left: 23px;
}
.files th:last-child {
    border: 0;
}
.files td {
    height: 27px;
    padding: 0 0 0 7px;
}
.files tbody::before {
    content: "";
    display: block;
    height: 8px;
}
.files td:first-child {
    display: flex;
    align-items: center;
    gap: 7px;
    padding-left: 27px;
    color: #111;
    font-size: 16px;
}
.files td:nth-child(2) {
    font-size: 16px;
}
.files td:nth-child(4) {
    padding-right: 10px;
    text-align: right;
}
.files svg {
    width: 16px;
    height: 20px;
}
.files .sort {
    position: absolute;
    left: 173px;
    top: 1px;
    width: 10px;
    height: 6px;
}
.save-area {
    position: relative;
    padding: 13px 7px 17px 0;
    background: #eff2f0;
}
.field {
    display: flex;
    align-items: center;
    gap: 6px;
    margin-bottom: 4px;
}
.field label {
    width: 151px;
    text-align: right;
}
.combo {
    flex: 1;
    position: relative;
    height: 27px;
    border: 1px solid #7d868b;
    background: #fff;
}
.combo input, .combo select {
    appearance: none;
    width: 100%;
    height: 25px;
    padding: 0 24px 0 3px;
}
.combo input {
    font-size: 16px;
}
.combo select {
    background: #e1e4e2;
}
.combo ::selection {
    background: #0a6fd6;
    color: #fff;
}
.combo svg {
    position: absolute;
    right: 4px;
    top: 9px;
    width: 11px;
    height: 8px;
    color: #555;
}
.actions {
    display: flex;
    align-items: center;
    gap: 17px;
    margin: 34px 14px 0 18px;
}
.hide-folders {
    display: flex;
    align-items: center;
    gap: 10px;
    margin: 6px auto 0 -5px;
    font-size: 16px;
}
.hide-folders svg {
    width: 11px;
    height: 8px;
}
.push {
    width: 108px;
    height: 31px;
    border: 1px solid #a6adb1;
    background: #e1e4e2;
}
.grip {
    position: absolute;
    right: 3px;
    bottom: 2px;
    width: 12px;
    height: 12px;
}

/* confirmation */
.confirm {
    position: absolute;
    left: 730px;
    top: 414px;
    width: 442px;
    border: 1px solid #777;
    background: #fdfffe;
    color: #111;
    font-size: 16px;
    box-shadow: 2px 4px 16px rgba(0, 0, 0, .35);
}
.confirm h2 {
    padding: 8px 9px 1px;
    font-size: 16px;
    line-height: 20px;
}
.message {
    display: flex;
    gap: 13px;
    height: 86px;
    padding: 21px 13px;
}
.message svg {
    width: 40px;
    height: 40px;
}
.message p {
    padding-top: 6px;
    line-height: 20px;
}
.confirm footer {
    display: flex;
    justify-content: flex-end;
    gap: 11px;
    padding: 11px 14px 12px;
    border-top: 1px solid #dfe1e0;
    background: #eff2f0;
}
.confirm button {
    width: 79px;
    height: 27px;
    border: 1px solid #adb0ae;
    background: #e1e4e2;
    line-height: 20px;
}
.confirm .default {
    border: 2px solid #0a6cbd;
}
.click-mark {
    position: absolute;
    left: 969px;
    top: 537px;
    width: 47px;
    height: 47px;
    padding: 24px 0 0 23px;
    border-radius: 50%;
    background: rgba(255, 80, 64, .7);
}
.click-mark svg {
    width: 13px;
    height: 21px;
}
```
